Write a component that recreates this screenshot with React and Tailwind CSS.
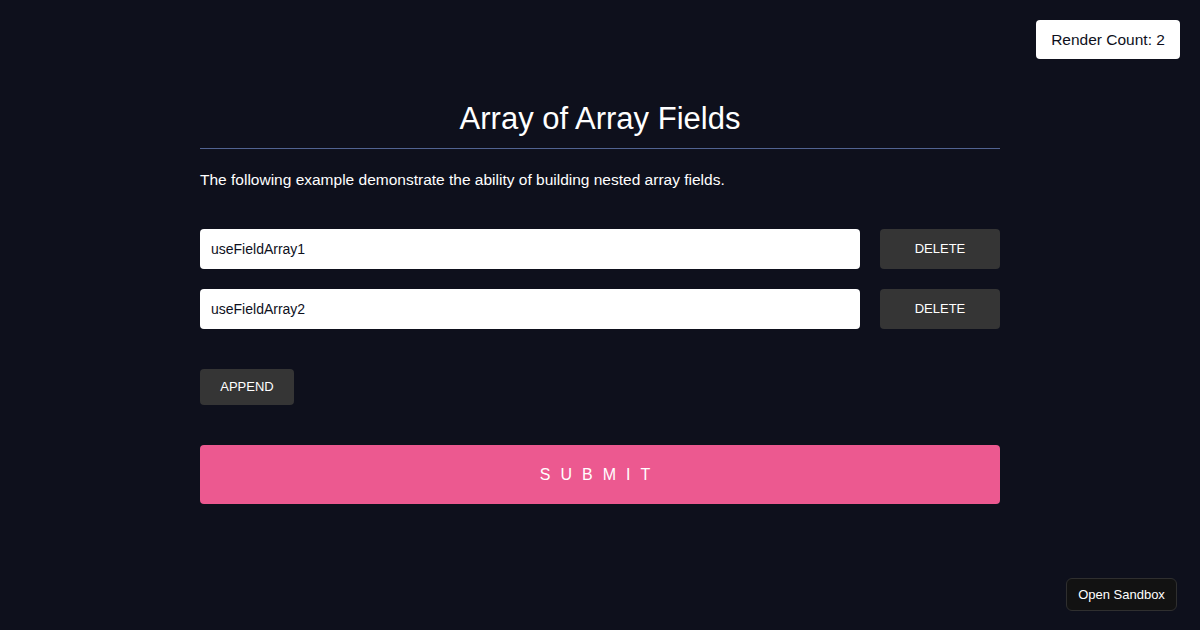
import React from 'react';

export default function App() {
  const fields = ['useFieldArray1', 'useFieldArray2'];

  return (
    <div className="relative min-h-[630px] w-full bg-[#0e101c] text-white" style={{ fontFamily: '"Liberation Sans", Arial, sans-serif' }}>
      <div className="absolute right-5 top-5 flex h-[39px] w-[144px] items-center justify-center rounded bg-white text-[15.5px] text-[#0e101c]">
        Render Count: 2
      </div>

      <div className="mx-auto w-[800px] pt-[101px]">
        <h1 className="border-b border-[#516391] pb-[11px] text-center text-[31px] font-normal leading-[36px]">
          Array of Array Fields
        </h1>
        <p className="mt-[19px] text-[15.5px] leading-6">
          The following example demonstrate the ability of building nested array fields.
        </p>

        <div className="mt-[37px] flex flex-col gap-5">
          {fields.map((f) => (
            <div key={f} className="flex gap-5">
              <input
                defaultValue={f}
                className="h-10 flex-1 rounded bg-white px-[11px] text-[14px] text-[#0e101c] outline-none"
              />
              <button className="h-10 w-[120px] rounded bg-[#353535] text-[13px] text-white">DELETE</button>
            </div>
          ))}
        </div>

        <button className="mt-10 h-9 w-[94px] rounded bg-[#353535] text-[13px] text-white">APPEND</button>

        <button className="mt-10 flex h-[59px] w-full items-center justify-center rounded bg-[#ec5990] text-[16px] tracking-[10px] text-white">
          SUBMIT
        </button>
      </div>

      <div className="absolute bottom-[19px] right-[23px] flex h-[33px] w-[111px] items-center justify-center rounded-md border border-[#2f2f2f] bg-[#121212] text-[13px] text-white">
        Open Sandbox
      </div>
    </div>
  );
}
